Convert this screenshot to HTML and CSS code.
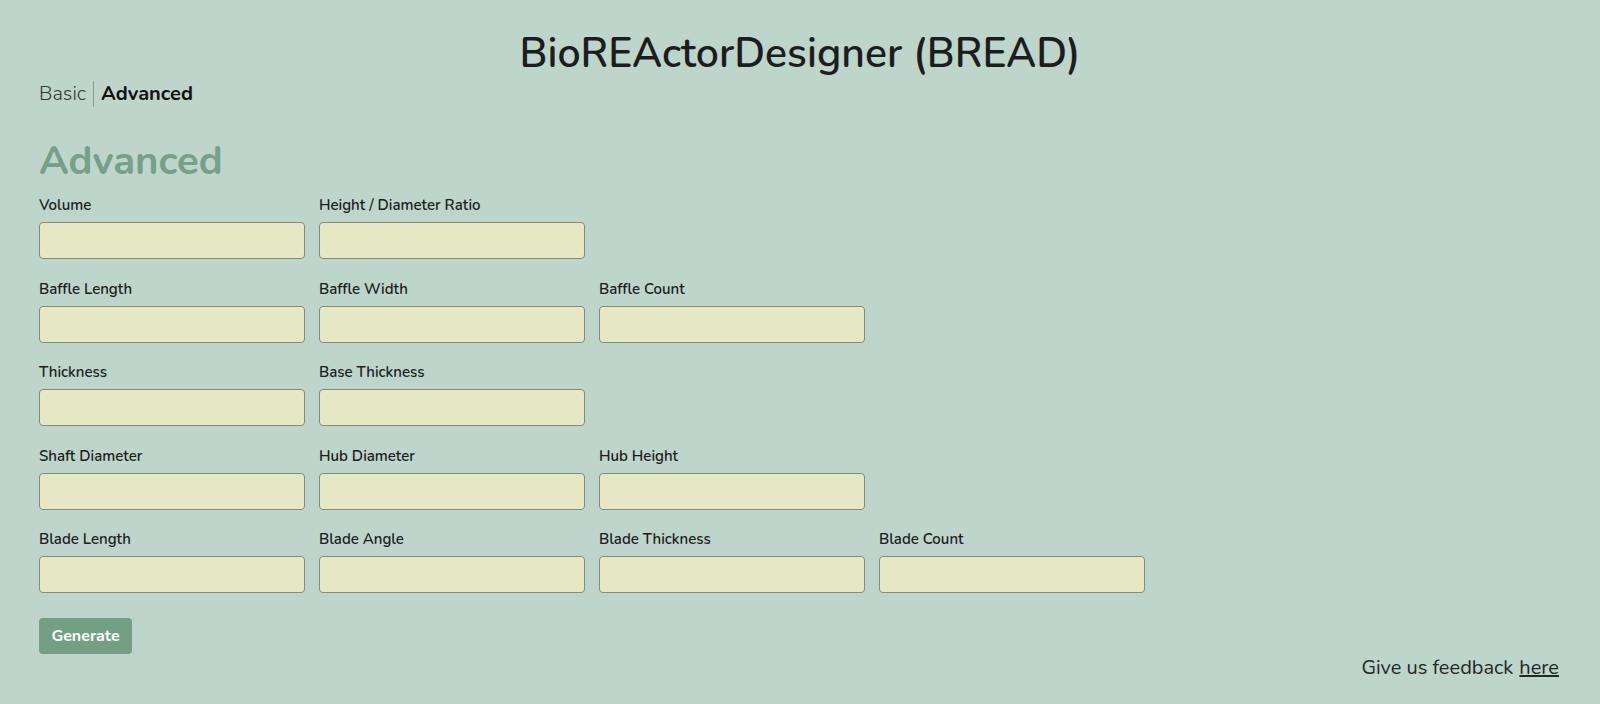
FILE: index.html
```html
<!DOCTYPE html>
<html lang="en">
<head>
<meta charset="utf-8">
<title>BioREActorDesigner (BREAD)</title>
<link rel="stylesheet" href="styles.css">
</head>
<body>
  <header class="site-header">
    <h1 class="site-title">BioREActorDesigner (BREAD)</h1>
    <nav class="tabs">
      <a class="tab" href="#">Basic</a>
      <span class="tab-sep"></span>
      <a class="tab tab-active" href="#">Advanced</a>
    </nav>
  </header>

  <main class="content">
    <h2 class="section-title">Advanced</h2>
    <form class="form">
      <div class="form-row">
        <div class="field"><label class="field-label">Volume</label><input class="field-input" type="text"></div>
        <div class="field"><label class="field-label">Height / Diameter Ratio</label><input class="field-input" type="text"></div>
      </div>
      <div class="form-row">
        <div class="field"><label class="field-label">Baffle Length</label><input class="field-input" type="text"></div>
        <div class="field"><label class="field-label">Baffle Width</label><input class="field-input" type="text"></div>
        <div class="field"><label class="field-label">Baffle Count</label><input class="field-input" type="text"></div>
      </div>
      <div class="form-row">
        <div class="field"><label class="field-label">Thickness</label><input class="field-input" type="text"></div>
        <div class="field"><label class="field-label">Base Thickness</label><input class="field-input" type="text"></div>
      </div>
      <div class="form-row">
        <div class="field"><label class="field-label">Shaft Diameter</label><input class="field-input" type="text"></div>
        <div class="field"><label class="field-label">Hub Diameter</label><input class="field-input" type="text"></div>
        <div class="field"><label class="field-label">Hub Height</label><input class="field-input" type="text"></div>
      </div>
      <div class="form-row">
        <div class="field"><label class="field-label">Blade Length</label><input class="field-input" type="text"></div>
        <div class="field"><label class="field-label">Blade Angle</label><input class="field-input" type="text"></div>
        <div class="field"><label class="field-label">Blade Thickness</label><input class="field-input" type="text"></div>
        <div class="field"><label class="field-label">Blade Count</label><input class="field-input" type="text"></div>
      </div>
      <div class="form-actions">
        <button class="btn-generate" type="button">Generate</button>
      </div>
    </form>
  </main>

  <footer class="site-footer">
    Give us feedback <a class="footer-link" href="#">here</a>
  </footer>
</body>
</html>
```

FILE: styles.css
```css
html, body {
  margin: 0;
  padding: 0;
}

body {
  background: #bed5cb;
  font-family: "Nunito", "Lato", "Noto Sans", sans-serif;
  color: #1e2220;
  padding: 0 39px;
  min-height: 704px;
  box-sizing: border-box;
}

.site-header {
  display: flex;
  flex-direction: column;
}

.site-title {
  margin: 30px 0 0;
  text-align: center;
  font-size: 41px;
  line-height: 48px;
  font-weight: 600;
  color: #1b1e1d;
}

.tabs {
  display: flex;
  align-items: center;
  gap: 7px;
  height: 30px;
  margin-top: 1px;
}

.tab {
  font-size: 20px;
  line-height: 30px;
  text-decoration: none;
  color: #333836;
  font-weight: 300;
}

.tab-active {
  color: #111;
  font-weight: 700;
}

.tab-sep {
  width: 1px;
  height: 26px;
  background: #8c9a94;
}

.content {
  display: flex;
  flex-direction: column;
}

.section-title {
  margin: 28px 0 10px;
  font-size: 40px;
  line-height: 48px;
  font-weight: 700;
  color: #76a088;
}

.form {
  display: flex;
  flex-direction: column;
  gap: 19.5px;
}

.form-row {
  display: flex;
  gap: 14px;
}

.field {
  display: flex;
  flex-direction: column;
  gap: 6px;
  width: 266px;
}

.field-label {
  font-size: 15px;
  line-height: 21px;
  font-weight: 600;
  color: #1b1e1d;
}

.field-input {
  box-sizing: border-box;
  height: 37px;
  width: 100%;
  background: #e6e7c3;
  border: 1px solid #858a7c;
  border-radius: 4px;
  padding: 6px 10px;
  font: inherit;
  font-size: 15px;
}

.form-actions {
  display: flex;
  margin-top: 5px;
}

.btn-generate {
  height: 36px;
  width: 93px;
  background: #73a085;
  color: #fff;
  border: none;
  border-radius: 4px;
  font-family: inherit;
  font-size: 16px;
  font-weight: 700;
  padding: 0;
}

.site-footer {
  display: flex;
  justify-content: flex-end;
  gap: 6px;
  margin-top: 0;
  padding-right: 2px;
  font-size: 20px;
  line-height: 28px;
  color: #222826;
}

.footer-link {
  color: #222826;
  text-decoration: underline;
}
```
